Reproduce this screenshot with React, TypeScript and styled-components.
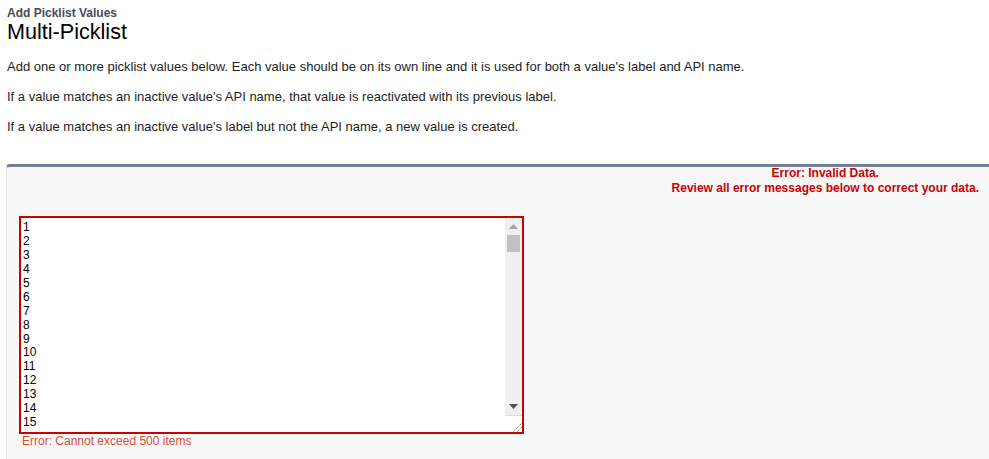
import React from "react";
import styled, { createGlobalStyle } from "styled-components";

const Global = createGlobalStyle`
  html, body { margin: 0; padding: 0; background: #ffffff; }
  body { font-family: Arial, "Liberation Sans", Helvetica, sans-serif; color: #222222; }
`;

const Page = styled.div`
  width: 989px;
  height: 459px;
  overflow: hidden;
  box-sizing: border-box;
  padding: 6px 0 0 6px;
  display: flex;
  flex-direction: column;
`;

const Header = styled.div`
  padding-left: 1px;
  display: flex;
  flex-direction: column;
`;

const PageType = styled.div`
  font-size: 12px;
  font-weight: bold;
  color: #4a4a56;
  line-height: 14px;
`;

const PageTitle = styled.h1`
  margin: 0;
  font-size: 21.6px;
  font-weight: normal;
  color: #000000;
  line-height: 24px;
`;

const Intro = styled.div`
  padding-left: 1px;
  margin-top: 16px;
  display: flex;
  flex-direction: column;
  gap: 16px;
`;

const Para = styled.p`
  margin: 0;
  font-size: 13px;
  line-height: 14px;
  color: #1e1e1e;
`;

const Panel = styled.div`
  margin-top: 30px;
  flex: 1;
  background: #f8f8f8;
  border-top: 3px solid #747e96;
  border-left: 1px solid #e4e4e4;
  border-top-left-radius: 4px;
  display: flex;
  flex-direction: column;
`;

const ErrorBlock = styled.div`
  align-self: flex-end;
  margin-right: 10px;
  margin-top: -1px;
  text-align: center;
  font-size: 12px;
  font-weight: bold;
  color: #cc0000;
  line-height: 15px;
`;

const FieldArea = styled.div`
  margin: 20px 0 0 12px;
  display: flex;
  flex-direction: column;
`;

const Frame = styled.div`
  width: 505px;
  height: 218px;
  box-sizing: border-box;
  border: 2px solid #cc0000;
  background: #ffffff;
  display: flex;
  align-items: flex-start;
`;

const Values = styled.textarea`
  flex: 1;
  height: 211px;
  box-sizing: border-box;
  border: none;
  outline: none;
  resize: none;
  overflow: hidden;
  margin: 0;
  padding: 3px 2px 0;
  font-family: Arial, "Liberation Sans", sans-serif;
  font-size: 12px;
  line-height: 13.93px;
  color: #000000;
  background: #ffffff;
`;

const ScrollBar = styled.div`
  width: 17px;
  align-self: stretch;
  background: #f0f0f0;
  display: flex;
  flex-direction: column;
`;

const ArrowButton = styled.div`
  height: 17px;
  display: flex;
  align-items: center;
  justify-content: center;
`;

const Track = styled.div`
  flex: 1;
  display: flex;
  flex-direction: column;
  align-items: center;
`;

const Thumb = styled.div`
  width: 13px;
  height: 17px;
  background: #c1c1c1;
`;

const Grip = styled.div`
  height: 17px;
  background: #ffffff;
  border-top: 1px solid #dcdcdc;
  box-sizing: border-box;
  display: flex;
  align-items: flex-end;
  justify-content: flex-end;
`;

const FieldError = styled.div`
  margin: 0 0 0 3px;
  font-size: 12px;
  line-height: 14px;
  color: #d74c3b;
`;

const lines = Array.from({ length: 520 }, (_, i) => String(i + 1)).join("\n");

export default function App() {
  return (
    <>
      <Global />
      <Page>
        <Header>
          <PageType>Add Picklist Values</PageType>
          <PageTitle>Multi-Picklist</PageTitle>
        </Header>
        <Intro>
          <Para>
            Add one or more picklist values below. Each value should be on its own line and it is used for both a value's label and API name.
          </Para>
          <Para>If a value matches an inactive value's API name, that value is reactivated with its previous label.</Para>
          <Para>If a value matches an inactive value's label but not the API name, a new value is created.</Para>
        </Intro>
        <Panel>
          <ErrorBlock>
            Error: Invalid Data.
            <br />
            Review all error messages below to correct your data.
          </ErrorBlock>
          <FieldArea>
            <Frame>
              <Values defaultValue={lines} spellCheck={false} />
              <ScrollBar>
                <ArrowButton>
                  <svg width="9" height="5" viewBox="0 0 9 5">
                    <polygon points="0,5 9,5 4.5,0" fill="#a3a3a3" />
                  </svg>
                </ArrowButton>
                <Track>
                  <Thumb />
                </Track>
                <ArrowButton>
                  <svg width="9" height="5" viewBox="0 0 9 5">
                    <polygon points="0,0 9,0 4.5,5" fill="#505050" />
                  </svg>
                </ArrowButton>
                <Grip>
                  <svg width="12" height="12" viewBox="0 0 12 12">
                    <line x1="3" y1="12" x2="12" y2="3" stroke="#6a6a6a" strokeWidth="1" strokeDasharray="1 1" />
                    <line x1="7" y1="12" x2="12" y2="7" stroke="#6a6a6a" strokeWidth="1" strokeDasharray="1 1" />
                  </svg>
                </Grip>
              </ScrollBar>
            </Frame>
            <FieldError>Error: Cannot exceed 500 items</FieldError>
          </FieldArea>
        </Panel>
      </Page>
    </>
  );
}
